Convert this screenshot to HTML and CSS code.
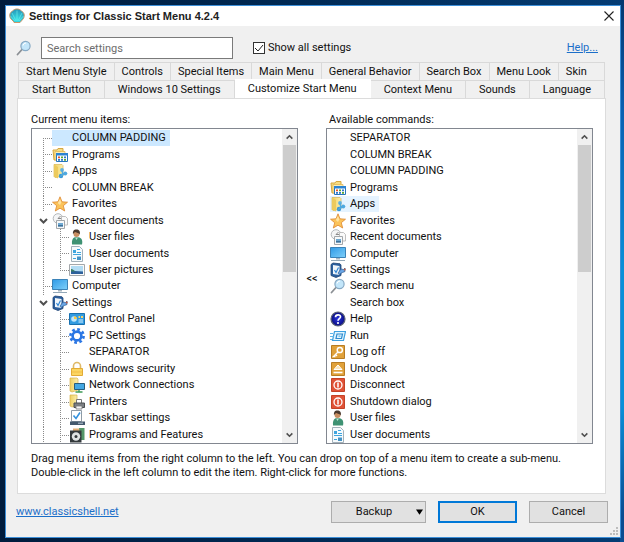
FILE: index.html
```html
<!DOCTYPE html>
<html lang="en">

<head>
  <title>Settings for Classic Start Menu 4.2.4</title>
  <meta charset="utf-8" />
  <meta name="viewport" content="width=device-width, initial-scale=1">
  <link rel="stylesheet" href="styles.css">
</head>

<body>
  <!-- icon set, every icon is on a 16x16 grid -->
  <svg class="sprite" aria-hidden="true">
    <defs>
      <linearGradient id="g-screen" x1="0" y1="0" x2="1" y2="1"><stop offset="0" stop-color="#2f9ae6"/><stop offset="1" stop-color="#7fd0fa"/></linearGradient>
      <linearGradient id="g-folder" x1="0" y1="0" x2="1" y2="0"><stop offset="0" stop-color="#f0d060"/><stop offset="1" stop-color="#fbeeae"/></linearGradient>
      <radialGradient id="g-help"><stop offset="0" stop-color="#2a35e0"/><stop offset="1" stop-color="#0a0d80"/></radialGradient>
      <radialGradient id="g-shell" cx=".5" cy=".8" r=".8"><stop offset="0" stop-color="#37e3e6"/><stop offset="1" stop-color="#2795b8"/></radialGradient>
    </defs>
    <symbol id="shell" viewBox="0 0 16 16">
      <path d="M5 14 1.500 10.500C0 7 1 4.500 3 3.500 4.500 1.500 6.500 1 8 1s3.500.5 5 2.500c2 1 3 3.500 1.500 7L11 14.500H5z" fill="url(#g-shell)" stroke="#c9986c"/>
      <path d="M7 13 3 5M8 13V2.500M9 13l4-8M6 13 1.500 8M10 13l4.500-5" stroke="#6ff2ee" stroke-width=".6"/>
    </symbol>
    <symbol id="search" viewBox="0 0 16 16">
      <path d="M1.500 14.500 6 9.500" stroke="#8b8f94" stroke-width="1.800" stroke-linecap="round"/>
      <circle cx="9.500" cy="6" r="4.600" fill="#c3e6fa" stroke="#87a9c4" stroke-width="1.200"/>
      <path d="M7 5.500a3 3 0 0 1 3-2.500" fill="none" stroke="#fff"/>
    </symbol>
    <symbol id="programs" viewBox="0 0 16 16">
      <path d="M1 3h4l1-1.500h5V13H2z" fill="#f6dc83" stroke="#d5a740"/>
      <path d="M3 4.500h10V13H3z" fill="#fbedb4" stroke="#dcb24e" stroke-width=".7"/>
      <path d="M4.500 6.500h11v8h-11z" fill="#fff" stroke="#2475bd"/>
      <path d="M4 6h12v2.500H4z" fill="#2b83d2"/>
      <path d="M6 9.500h2v1.700H6z" fill="#e3542d"/><path d="M9 9.500h2v1.700H9zM12 12h2v1.700h-2z" fill="#57a736"/><path d="M12 9.500h2v1.700h-2zM6 12h2v1.700H6zM9 12h2v1.700H9z" fill="#2d77cc"/>
    </symbol>
    <symbol id="apps" viewBox="0 0 16 16">
      <path d="M2 1.500h8l1 1V13l-8 1.500-1-1z" fill="url(#g-folder)" stroke="#d9b552" stroke-width=".7"/>
      <path d="M2 1.500 6 4v11.500l-4-2z" fill="#ecca5d"/>
      <circle cx="10" cy="7" r="1.900" fill="#5fb2e2"/><circle cx="13.200" cy="10.500" r="2" fill="#4fa8df"/><circle cx="9" cy="13" r="2.200" fill="#3d99d5"/>
      <path d="m10 7 .5 3.500h3L9 13l1.500-2.500" stroke="#4fa8df" fill="none" stroke-width="1.200"/>
    </symbol>
    <symbol id="star" viewBox="0 0 16 16">
      <path d="m8 .8 2 5 5.500.4-4.200 3.500 1.400 5.300L8 12.200 3.300 15l1.400-5.300L.5 6.200 6 5.800z" fill="#fbc35a" stroke="#dd8730" stroke-width=".8"/>
      <path d="m8 3 1.300 3.500L8 9 5.800 7z" fill="#ffe3a0"/>
    </symbol>
    <symbol id="recent" viewBox="0 0 16 16">
      <circle cx="6" cy="5.500" r="4.800" fill="#f4f5f6" stroke="#b4b8bb"/>
      <path d="M6 5.500h3.500M6 5.500 8.500 3" stroke="#8a8a8a" fill="none"/>
      <path d="M9.500 3.500h4l2 2V12h-6z" fill="#fafafa" stroke="#b0b0b0" stroke-width=".8"/>
      <path d="M4.500 7.500h8v8h-8z" fill="#f6f8f9" stroke="#a3a7aa"/>
      <path d="M6 10h5v3.500H6z" fill="#6fa9d2"/><path d="M6 12h5v1.500H6z" fill="#3f7199"/>
    </symbol>
    <symbol id="user" viewBox="0 0 16 16">
      <path d="M3 15.500c-.5-5 1-7.500 4.500-7.500 5 0 6.500 3 5.500 7.500z" fill="#3e9273"/>
      <path d="M6 8.500 7.500 11 9 8.500z" fill="#bfe0d1"/>
      <circle cx="7.500" cy="5" r="3" fill="#c98e61"/>
      <path d="M4 5C3.500 1.500 5.500.3 7.500.5c2.500 0 4 1.500 3.300 5C10 4 8 3.500 6 3z" fill="#49382d"/>
    </symbol>
    <symbol id="doc" viewBox="0 0 16 16">
      <path d="M2.500.5h8l3 3v12h-11z" fill="#f5fafd" stroke="#a3b1ba"/>
      <path d="M4 4h3v3H4z" fill="#3da5df"/><path d="M8 3.500h3M8 6.500h4M4 8.500h8M4 12.500h3" stroke="#3da5df"/><path d="M8 10.500h4V14H8z" fill="#4592c4"/>
    </symbol>
    <symbol id="picture" viewBox="0 0 16 16">
      <path d="M.5 2.500h15v11H.5z" fill="#fafafa" stroke="#a3a7aa"/>
      <path d="M2 4h12v8H2z" fill="#b2dcf4"/><path d="M2 7.500 6 9l8 .5V12H2z" fill="#2d609b"/><path d="M2 7c2 0 3 2 5 2.500H2z" fill="#3b7f63"/>
    </symbol>
    <symbol id="computer" viewBox="0 0 16 16">
      <path d="M.5 1.500h15v10H.5z" fill="url(#g-screen)" stroke="#3b83b8"/>
      <path d="M6 12h4v1.500H6z" fill="#a6b5c0"/><path d="M1 14.500h14" stroke="#93a8b8"/>
    </symbol>
    <symbol id="settings" viewBox="0 0 16 16">
      <path d="M1 2.500 3 1l7 .8 1 1.200v10.500L6 15.500l-5-2z" fill="#2b5f9e" stroke="#1f4473" stroke-width=".8"/>
      <path d="m3 3 6.500 1v9L3 12z" fill="#f1f6fa"/>
      <path d="m4.500 8 1.500 2.500L8.500 5.500" stroke="#3287d6" fill="none" stroke-width="1.200"/>
      <path d="m8 11 3-4 2.500.5L15 6v3.500l-2.500 1L9 12.500z" fill="#6aa5e4" stroke="#2c5a90" stroke-width=".7"/>
      <circle cx="14.700" cy="7.500" r="1" fill="#bd5a44"/>
    </symbol>
    <symbol id="cpanel" viewBox="0 0 16 16">
      <path d="M.5 2.500h15v11H.5z" fill="#329be0" stroke="#1871b0"/>
      <circle cx="5" cy="8" r="2.800" fill="#bfe6fb"/><path d="M5 5.200A2.800 2.800 0 0 1 7.800 8H5z" fill="#f7c944"/>
      <path d="M9.500 5h1.500v2H9.500zM12 5h2v2h-2z" fill="#f7d267"/><path d="M9.500 9H14M9.500 11H14" stroke="#d8f1ff"/>
    </symbol>
    <symbol id="gear" viewBox="0 0 16 16">
      <circle cx="8" cy="8" r="6.600" fill="none" stroke="#2a76e4" stroke-width="2.600" stroke-dasharray="2.700 2.484"/>
      <circle cx="8" cy="8" r="4.400" fill="#fff" stroke="#2a76e4" stroke-width="2.600"/>
    </symbol>
    <symbol id="lock" viewBox="0 0 16 16">
      <path d="M4.500 8V5a3.500 3.500 0 0 1 7 0v3" fill="none" stroke="#dfb967" stroke-width="1.600"/>
      <path d="M2.500 7.500h11v7h-11z" fill="#fbd662" stroke="#e2ab36"/><path d="M3 11h10" stroke="#f3bd45"/>
    </symbol>
    <symbol id="network" viewBox="0 0 16 16">
      <path d="M1 1h7l1 1v11l-6 2-2-1z" fill="url(#g-folder)" stroke="#d7b14a" stroke-width=".7"/>
      <path d="M5.500 6.500h10v6h-10z" fill="#43a7e3" stroke="#285d7d"/>
      <path d="M10 13v1.500M6.500 15h7" stroke="#3e9a55" stroke-width="1.400"/>
    </symbol>
    <symbol id="printer" viewBox="0 0 16 16">
      <path d="M1 1h7v11l-5 1-2-1z" fill="url(#g-folder)" stroke="#d7b14a" stroke-width=".7"/>
      <path d="M7.500 5.500h5V10h-5z" fill="#fff" stroke="#777"/><path d="M5 9h10.500v4.500H5z" fill="#7b7f83" stroke="#4b4e51"/>
      <path d="M7 12h6v3H7z" fill="#f3f3f3" stroke="#777" stroke-width=".8"/>
    </symbol>
    <symbol id="taskbar" viewBox="0 0 16 16">
      <path d="M2.500.5h10v11h-10z" fill="#fff" stroke="#8e9ba6"/><path d="m4.500 5.500 2.500 3L11 2.500" fill="none" stroke="#3391dd" stroke-width="1.600"/>
      <path d="M1 11.500h15V15H1z" fill="#44596d"/><path d="M9 13.200h5" stroke="#b9c9d6"/>
    </symbol>
    <symbol id="features" viewBox="0 0 16 16">
      <path d="M4 1.500h11V13H4z" fill="#e4b077"/><path d="M10 1h5.500v12H12z" fill="#54976a"/>
      <path d="M1 3.500h11.500v12H1z" fill="#33393c"/><circle cx="7" cy="9.500" r="4.200" fill="#dfe3e4"/><circle cx="7" cy="9.500" r="1.500" fill="#33393c"/>
    </symbol>
    <symbol id="help" viewBox="0 0 16 16">
      <circle cx="8" cy="8" r="7" fill="url(#g-help)" stroke="#5d6474" stroke-width="1.200"/>
      <path d="M5.500 6.300C5.500 3 10.800 3.200 10.500 6 10.300 7.600 8 7.800 8 9.800" fill="none" stroke="#fff" stroke-width="1.700"/><circle cx="8" cy="12" r="1.100" fill="#fff"/>
    </symbol>
    <symbol id="run" viewBox="0 0 16 16">
      <path d="M4.500 3.500h11l-2 9h-11z" fill="#e3f4fd" stroke="#3c9fdf" stroke-width="1.200"/>
      <path d="M7 6h5.500l-1 4.500H6z" fill="none" stroke="#2e8cd0" stroke-width="1.200"/><path d="M0 5.500h3M0 8.500h4M0 11.500h2M8.500 8.200h2" stroke="#5db4e8" stroke-width="1.200"/>
    </symbol>
    <symbol id="logoff" viewBox="0 0 16 16">
      <path d="M1.500 1.500h13v13h-13z" fill="#e0a13a" stroke="#b87d24"/>
      <circle cx="9.800" cy="6" r="2.600" fill="none" stroke="#fff" stroke-width="1.500"/><path d="m8 8-4.500 4.500h2M5.500 10.500 7 12" stroke="#fff" stroke-width="1.400" fill="none"/>
    </symbol>
    <symbol id="undock" viewBox="0 0 16 16">
      <path d="M1.500 1.500h13v13h-13z" fill="#e0a13a" stroke="#b87d24"/>
      <path d="m8 4 4 4.500H4z" fill="#fbe7bd" stroke="#fff"/><path d="M3.500 11.500h9" stroke="#fff" stroke-width="1.600"/>
    </symbol>
    <symbol id="power" viewBox="0 0 16 16">
      <path d="M1.500 1.500h13v13h-13z" fill="#e05236" stroke="#c44328"/>
      <circle cx="8" cy="8" r="4" fill="none" stroke="#fff" stroke-width="1.300"/><path d="M8 5.500v5" stroke="#fff" stroke-width="1.500"/>
    </symbol>
    <symbol id="up" viewBox="0 0 16 16"><path d="m4.500 10 3.500-3.500L11.500 10" fill="none" stroke="#505050" stroke-width="2"/></symbol>
    <symbol id="down" viewBox="0 0 16 16"><path d="m4.500 6 3.500 3.500L11.500 6" fill="none" stroke="#505050" stroke-width="2"/></symbol>
  </svg>

  <div class="window">
    <div class="titlebar">
      <svg class="icon"><use href="#shell"/></svg>
      <h1>Settings for Classic Start Menu 4.2.4</h1>
      <button class="close" type="button" aria-label="Close">
        <svg viewBox="0 0 10 10"><path d="m.5.5 9 9M9.500.5l-9 9" stroke="#222" stroke-width="1.100"/></svg>
      </button>
    </div>

    <div class="toolbar">
      <svg class="icon"><use href="#search"/></svg>
      <input class="search" type="text" placeholder="Search settings" aria-label="Search settings">
      <label class="show-all"><input type="checkbox" checked>Show all settings</label>
      <a class="help" href="#help-page">Help...</a>
    </div>

    <div class="tabs">
      <div class="tab-row top">
        <button type="button">Start Menu Style</button>
        <button type="button">Controls</button>
        <button type="button">Special Items</button>
        <button type="button">Main Menu</button>
        <button type="button">General Behavior</button>
        <button type="button">Search Box</button>
        <button type="button">Menu Look</button>
        <button type="button">Skin</button>
      </div>
      <div class="tab-row">
        <button type="button">Start Button</button>
        <button type="button">Windows 10 Settings</button>
        <button type="button" class="active">Customize Start Menu</button>
        <button type="button">Context Menu</button>
        <button type="button">Sounds</button>
        <button type="button">Language</button>
      </div>
    </div>

    <div class="panel">
      <div class="columns">
        <!-- left column -->
        <div class="column">
          <h2>Current menu items:</h2>
          <div class="listbox">
            <ul>
              <li><i class="line first"></i><span class="item selected"><svg class="icon"></svg>COLUMN PADDING</span></li>
              <li><i class="line"></i><span class="item"><svg class="icon"><use href="#programs"/></svg>Programs</span></li>
              <li><i class="line"></i><span class="item"><svg class="icon"><use href="#apps"/></svg>Apps</span></li>
              <li><i class="line"></i><span class="item"><svg class="icon"></svg>COLUMN BREAK</span></li>
              <li><i class="line"></i><span class="item"><svg class="icon"><use href="#star"/></svg>Favorites</span></li>
              <li><svg class="toggle"><use href="#down"/></svg><span class="item"><svg class="icon"><use href="#recent"/></svg>Recent documents</span></li>
              <li><i class="line pass"></i><i class="line"></i><span class="item"><svg class="icon"><use href="#user"/></svg>User files</span></li>
              <li><i class="line pass"></i><i class="line"></i><span class="item"><svg class="icon"><use href="#doc"/></svg>User documents</span></li>
              <li><i class="line pass"></i><i class="line last"></i><span class="item"><svg class="icon"><use href="#picture"/></svg>User pictures</span></li>
              <li><i class="line"></i><span class="item"><svg class="icon"><use href="#computer"/></svg>Computer</span></li>
              <li><svg class="toggle"><use href="#down"/></svg><span class="item"><svg class="icon"><use href="#settings"/></svg>Settings</span></li>
              <li><i class="line pass"></i><i class="line"></i><span class="item"><svg class="icon"><use href="#cpanel"/></svg>Control Panel</span></li>
              <li><i class="line pass"></i><i class="line"></i><span class="item"><svg class="icon"><use href="#gear"/></svg>PC Settings</span></li>
              <li><i class="line pass"></i><i class="line"></i><span class="item"><svg class="icon"></svg>SEPARATOR</span></li>
              <li><i class="line pass"></i><i class="line"></i><span class="item"><svg class="icon"><use href="#lock"/></svg>Windows security</span></li>
              <li><i class="line pass"></i><i class="line"></i><span class="item"><svg class="icon"><use href="#network"/></svg>Network Connections</span></li>
              <li><i class="line pass"></i><i class="line"></i><span class="item"><svg class="icon"><use href="#printer"/></svg>Printers</span></li>
              <li><i class="line pass"></i><i class="line"></i><span class="item"><svg class="icon"><use href="#taskbar"/></svg>Taskbar settings</span></li>
              <li><i class="line pass"></i><i class="line"></i><span class="item"><svg class="icon"><use href="#features"/></svg>Programs and Features</span></li>
            </ul>
            <div class="scrollbar">
              <svg><use href="#up"/></svg>
              <div class="track"><div class="thumb"></div></div>
              <svg><use href="#down"/></svg>
            </div>
          </div>
        </div>

        <button class="move" type="button">&lt;&lt;</button>

        <!-- right column -->
        <div class="column">
          <h2>Available commands:</h2>
          <div class="listbox">
            <ul>
              <li><span class="item"><svg class="icon"></svg>SEPARATOR</span></li>
              <li><span class="item"><svg class="icon"></svg>COLUMN BREAK</span></li>
              <li><span class="item"><svg class="icon"></svg>COLUMN PADDING</span></li>
              <li><span class="item"><svg class="icon"><use href="#programs"/></svg>Programs</span></li>
              <li><span class="item hover"><svg class="icon"><use href="#apps"/></svg>Apps</span></li>
              <li><span class="item"><svg class="icon"><use href="#star"/></svg>Favorites</span></li>
              <li><span class="item"><svg class="icon"><use href="#recent"/></svg>Recent documents</span></li>
              <li><span class="item"><svg class="icon"><use href="#computer"/></svg>Computer</span></li>
              <li><span class="item"><svg class="icon"><use href="#settings"/></svg>Settings</span></li>
              <li><span class="item"><svg class="icon"><use href="#search"/></svg>Search menu</span></li>
              <li><span class="item"><svg class="icon"></svg>Search box</span></li>
              <li><span class="item"><svg class="icon"><use href="#help"/></svg>Help</span></li>
              <li><span class="item"><svg class="icon"><use href="#run"/></svg>Run</span></li>
              <li><span class="item"><svg class="icon"><use href="#logoff"/></svg>Log off</span></li>
              <li><span class="item"><svg class="icon"><use href="#undock"/></svg>Undock</span></li>
              <li><span class="item"><svg class="icon"><use href="#power"/></svg>Disconnect</span></li>
              <li><span class="item"><svg class="icon"><use href="#power"/></svg>Shutdown dialog</span></li>
              <li><span class="item"><svg class="icon"><use href="#user"/></svg>User files</span></li>
              <li><span class="item"><svg class="icon"><use href="#doc"/></svg>User documents</span></li>
            </ul>
            <div class="scrollbar">
              <svg><use href="#up"/></svg>
              <div class="track"><div class="thumb"></div></div>
              <svg><use href="#down"/></svg>
            </div>
          </div>
        </div>
      </div>

      <p class="hint">Drag menu items from the right column to the left. You can drop on top of a menu item to create a sub-menu.<br>
        Double-click in the left column to edit the item. Right-click for more functions.</p>
    </div>

    <div class="footer">
      <a href="#home">www.classicshell.net</a>
      <button class="btn backup" type="button"><span>Backup</span><svg viewBox="0 0 8 6"><path d="M0 0h8L4 6z"/></svg></button>
      <button class="btn default" type="button">OK</button>
      <button class="btn" type="button">Cancel</button>
    </div>
    <svg class="grip" viewBox="0 0 8 8"><path d="M6 0h2v2H6zM3 3h2v2H3zM6 3h2v2H6zM0 6h2v2H0zM3 6h2v2H3zM6 6h2v2H6z" fill="#bdbdbd"/></svg>
  </div>
</body>
</html>
```
FILE: styles.css
```css
* {
  box-sizing: border-box;
  margin: 0;
  padding: 0;
}

body {
  min-height: 100vh;
  display: flex;
  padding: 5px 3px 4px 5px;
  background:
    linear-gradient(#03386f, #0a5fb0 20%, #0a8fd8 50%, #0a8fd8 75%, #0a4c91 95%) right / 4px 100% no-repeat,
    linear-gradient(to right, #001c3d, #002a55 50%, #043c74);
  font: 11px/14px Roboto, "Open Sans", sans-serif;
  color: #111;
}

button,
input {
  font: inherit;
  color: inherit;
}

a {
  color: #1c6fc9;
}

.sprite {
  position: absolute;
  width: 0;
  height: 0;
}

.icon {
  width: 16px;
  height: 16px;
  flex: none;
}

.window {
  position: relative;
  flex: 1;
  min-width: 0;
  display: flex;
  flex-direction: column;
  background: #f0f0f0;
  border: 1px solid #3d8fd8;
}

/* title bar */

.titlebar {
  display: flex;
  align-items: center;
  height: 20px;
  padding: 0 6px 0 3px;
  background: #fff;
}

.titlebar h1 {
  flex: 1;
  margin-left: 4px;
  font: bold 11px/14px "Liberation Sans", Arial, sans-serif;
  color: #222;
}

.close {
  width: 10px;
  height: 10px;
  border: 0;
  background: none;
}

.close svg {
  display: block;
}

/* search row */

.toolbar {
  display: flex;
  align-items: center;
  padding: 11px 22px 3px 10px;
}

.search {
  width: 192px;
  height: 22px;
  margin-left: 9px;
  padding: 0 5px;
  border: 1px solid #7a7a7a;
  background: #fff;
}

.search::placeholder {
  color: #6d6d6d;
}

.show-all {
  display: flex;
  align-items: center;
  margin-left: 20px;
}

.show-all input {
  appearance: none;
  width: 12px;
  height: 12px;
  margin-right: 3px;
  border: 1px solid #333;
  background: #fff;
}

.show-all input:checked {
  background: #fff url("data:image/svg+xml,%3Csvg xmlns='http://www.w3.org/2000/svg' viewBox='0 0 10 10'%3E%3Cpath d='m1 5 3 3 5-6' fill='none' stroke='%23222'/%3E%3C/svg%3E") center / 10px 10px no-repeat;
}

.help {
  margin-left: auto;
}

/* tabs */

.tabs {
  padding: 0 15px 0 12px;
}

.tab-row {
  display: flex;
  height: 18px;
  border-left: 1px solid #d9d9d9;
}

.tab-row button {
  flex: 1 1 auto;
  border: 1px solid #d9d9d9;
  border-width: 1px 1px 0 0;
  background: #f0f0f0;
  line-height: 16px;
  white-space: nowrap;
}

.tab-row.top button {
  flex: none;
  padding: 0 7px;
}

.tab-row.top button:last-child {
  flex: 1;
  text-align: left;
}

.tab-row .active {
  margin-top: -1px;
  border-color: #fff;
  background: #fff;
}

/* page of the selected tab */

.panel {
  flex: 1;
  display: flex;
  flex-direction: column;
  margin: 0 14px 0 11px;
  padding: 14px 12px 13px 13px;
  border: 1px solid #dcdcdc;
  background: #fff;
}

.columns {
  flex: 1;
  display: flex;
}

.column {
  flex: 1;
  min-width: 0;
  display: flex;
  flex-direction: column;
}

.column h2 {
  font: inherit;
  margin-bottom: 1px;
}

.move {
  width: 28px;
  border: 0;
  background: none;
}

.move + .column h2 {
  padding-left: 3px;
}

.listbox {
  flex: 1;
  display: flex;
  border: 1px solid #828790;
}

.listbox ul {
  flex: 1;
  min-width: 0;
  display: grid;
  grid-auto-rows: 1fr;
  padding: 1px 0 0 3px;
  list-style: none;
}

.listbox li {
  display: flex;
  align-items: center;
}

.item {
  display: flex;
  align-items: center;
  gap: 4px;
  padding-right: 4px;
  white-space: nowrap;
}

.item.selected {
  background: #cce8ff;
}

.item.hover {
  background: #e5f3ff;
}

/* dotted tree lines */

.line {
  align-self: stretch;
  width: 17px;
  flex: none;
  background-image:
    repeating-linear-gradient(#8a8a8a 0 1px, transparent 1px 2px),
    repeating-linear-gradient(to right, #8a8a8a 0 1px, transparent 1px 2px);
  background-position: 8px 0, 8px 8px;
  background-size: 1px 100%, 9px 1px;
  background-repeat: no-repeat;
}

.line.pass {
  background-size: 1px 100%, 0 0;
}

.line.first {
  background-position: 8px 8px, 8px 8px;
}

.line.last {
  background-size: 1px 8px, 9px 1px;
}

.toggle {
  width: 17px;
  height: 16px;
  flex: none;
}

/* scroll bars */

.scrollbar {
  width: 15px;
  display: flex;
  flex-direction: column;
  padding: 0 1px;
  background: #f0f0f0;
}

.scrollbar svg {
  width: 13px;
  height: 16px;
}

.track {
  flex: 1;
}

.thumb {
  height: 45%;
  background: #cdcdcd;
}

.hint {
  margin-top: 8px;
}

/* bottom row */

.footer {
  display: flex;
  align-items: center;
  gap: 12px;
  padding: 7px 12px 14px 10px;
}

.footer a {
  margin-right: auto;
}

.btn {
  width: 79px;
  height: 22px;
  border: 1px solid #adadad;
  background: #e1e1e1;
}

.btn.default {
  border: 2px solid #0078d7;
}

.backup {
  width: 95px;
  display: flex;
  align-items: center;
  padding-right: 2px;
}

.backup span {
  flex: 1;
}

.backup svg {
  width: 7px;
  height: 6px;
}

.grip {
  position: absolute;
  right: 2px;
  bottom: 2px;
  width: 8px;
  height: 8px;
}
```
